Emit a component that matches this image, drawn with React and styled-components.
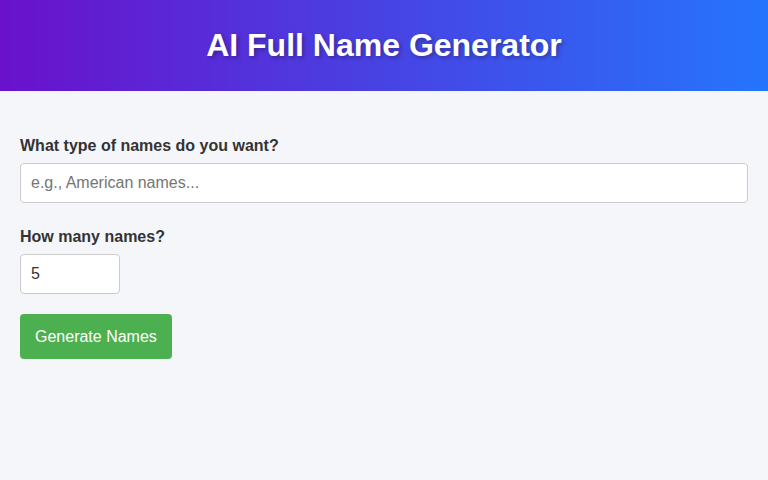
import React, { useState } from "react";
import styled, { createGlobalStyle } from "styled-components";

const GlobalStyle = createGlobalStyle`
    * {
        box-sizing: border-box;
    }
    body {
        margin: 0;
        background: #f5f6fa;
        font-family: "Liberation Sans", Arial, sans-serif;
        color: #333;
    }
`

const Header = styled.header`
    background: linear-gradient(to right, #6a11cb, #2575fc);
    padding: 27px 20px;
    text-align: center;
`

const Title = styled.h1`
    margin: 0;
    font-size: 32px;
    line-height: 37px;
    font-weight: bold;
    color: #fff;
    text-shadow: 2px 2px 4px rgba(0, 0, 0, 0.3);
`

const Main = styled.main`
    padding: 46px 20px 20px;
`

const Group = styled.div`
    margin-bottom: ${({ $gap }) => $gap || 20}px;
`

const Label = styled.label`
    display: block;
    font-size: 16px;
    line-height: 18px;
    font-weight: bold;
    color: #333;
    margin-bottom: 8px;
`

const Input = styled.input`
    display: block;
    width: ${({ $width }) => $width || "100%"};
    padding: 10px;
    font-size: 16px;
    line-height: 18px;
    font-family: "Liberation Sans", Arial, sans-serif;
    color: #333;
    background: #fff;
    border: 1px solid #ccc;
    border-radius: 4px;
    outline: none;

    &::placeholder {
        color: #757575;
    }
`

const Button = styled.button`
    padding: 13px 15px;
    font-size: 16px;
    line-height: 19px;
    font-family: "Liberation Sans", Arial, sans-serif;
    color: #fff;
    background: #4caf50;
    border: none;
    border-radius: 4px;
    cursor: pointer;
`

const App = () => {
    const [type, setType] = useState("");
    const [count, setCount] = useState(5);

    return (
        <>
            <GlobalStyle />
            <Header>
                <Title>AI Full Name Generator</Title>
            </Header>
            <Main>
                <Group $gap={25}>
                    <Label htmlFor="type">What type of names do you want?</Label>
                    <Input
                        id="type"
                        type="text"
                        placeholder="e.g., American names..."
                        value={type}
                        onChange={(e) => setType(e.target.value)}
                    />
                </Group>
                <Group $gap={20}>
                    <Label htmlFor="count">How many names?</Label>
                    <Input
                        id="count"
                        type="number"
                        $width="100px"
                        value={count}
                        onChange={(e) => setCount(e.target.value)}
                    />
                </Group>
                <Button>Generate Names</Button>
            </Main>
        </>
    );
};

export default App;
